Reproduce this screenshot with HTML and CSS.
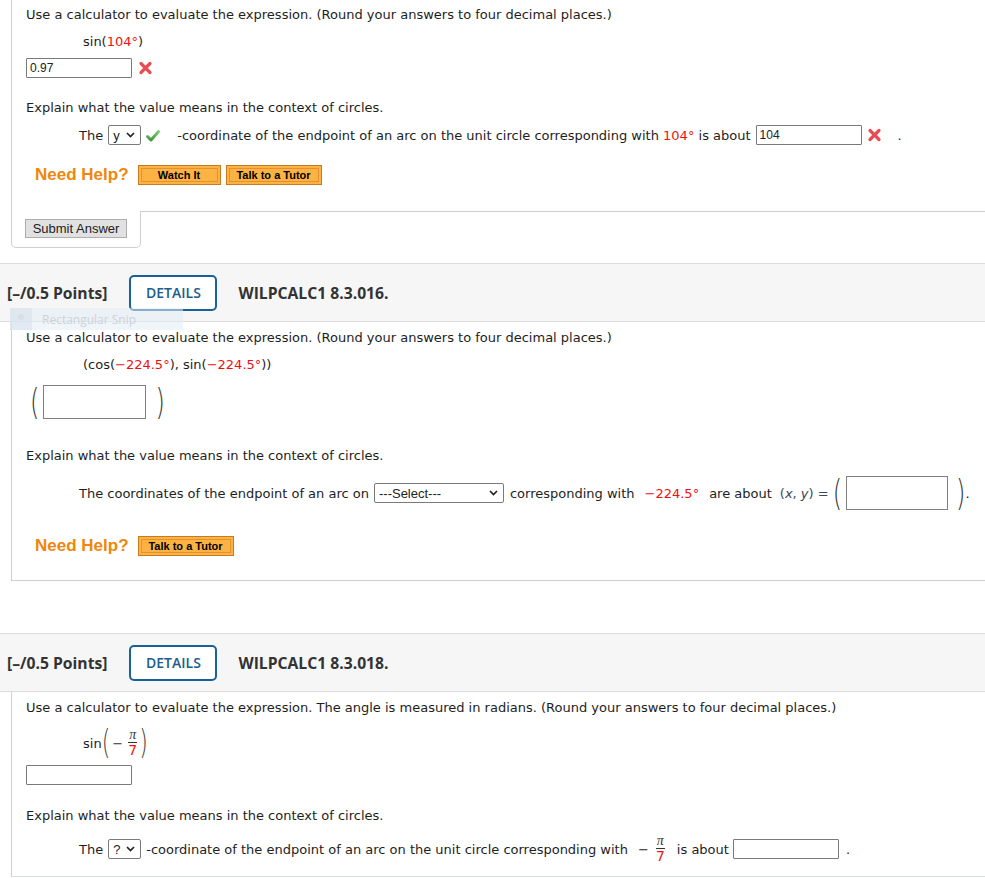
FILE: index.html
```html
<!DOCTYPE html>
<html>
<head>
<meta charset="utf-8">
<link rel="stylesheet" href="styles.css">
</head>
<body>
<div class="page">

  <div class="qbody q1">
    <div class="line">Use a calculator to evaluate the expression. (Round your answers to four decimal places.)</div>
    <div class="line expr mt9">sin(<span class="red">104°</span>)</div>
    <div class="row h20 mt7">
      <span class="inp w106">0.97</span>
      <svg class="xm ml6" width="15" height="14" viewBox="0 0 15 14"><path d="M3 2.5 L12 11.5 M12 2.5 L3 11.5" stroke="#e94c52" stroke-width="3.2" stroke-linecap="round"/></svg>
    </div>
    <div class="line mt21">Explain what the value means in the context of circles.</div>
    <div class="row h20 mt8 sent">
      <span>The</span>
      <span class="sel ml5 wsel">y<svg class="chev" width="9" height="6" viewBox="0 0 9 6"><path d="M1 1 L4.5 4.5 L8 1" fill="none" stroke="#222" stroke-width="1.7"/></svg></span>
      <svg class="ml4" width="16" height="15" viewBox="0 0 16 15"><defs><linearGradient id="g1" x1="0" y1="0" x2="0" y2="1"><stop offset="0" stop-color="#7ccc74"/><stop offset="1" stop-color="#3e9a3e"/></linearGradient></defs><path d="M2.5 8.5 L6 12 L13.5 3.5" fill="none" stroke="url(#g1)" stroke-width="3" stroke-linecap="round" stroke-linejoin="round"/></svg>
      <span class="ml16">-coordinate of the endpoint of an arc on the unit circle corresponding with <span class="red">104°</span> is about</span>
      <span class="inp w106 ml5">104</span>
      <svg class="xm ml5" width="15" height="14" viewBox="0 0 15 14"><path d="M3 2.5 L12 11.5 M12 2.5 L3 11.5" stroke="#e94c52" stroke-width="3.2" stroke-linecap="round"/></svg>
      <span class="ml16">.</span>
    </div>
    <div class="row h20 mt20 help">
      <span class="needhelp">Need Help?</span>
      <button class="obtn w83 ml9">Watch It</button>
      <button class="obtn w96 ml5">Talk to a Tutor</button>
    </div>
  </div>
  <div class="foot">
    <div class="tab"><button class="submit">Submit Answer</button></div>
    <div class="fill"></div>
  </div>

  <div class="qhead mt15">
    <span class="pts">[–/0.5 Points]</span>
    <span class="details">DETAILS</span>
    <span class="qid">WILPCALC1 8.3.016.</span>
  </div>
  <div class="qbody q2">
    <div class="line">Use a calculator to evaluate the expression. (Round your answers to four decimal places.)</div>
    <div class="line expr mt9">(cos(<span class="red">−224.5°</span>), sin(<span class="red">−224.5°</span>))</div>
    <div class="row h35 mt10 prow">
      <span class="bigp">(</span>
      <span class="box w103 ml4"></span>
      <span class="bigp ml9">)</span>
    </div>
    <div class="line mt28">Explain what the value means in the context of circles.</div>
    <div class="row h34 mt11 sent">
      <span>The coordinates of the endpoint of an arc on</span>
      <span class="sel ml5 wsel2">---Select---<svg class="chev" width="9" height="6" viewBox="0 0 9 6"><path d="M1 1 L4.5 4.5 L8 1" fill="none" stroke="#222" stroke-width="1.7"/></svg></span>
      <span class="ml6">corresponding with</span>
      <span class="red ml10">−224.5°</span>
      <span class="ml10">are about</span>
      <span class="xy ml8">(<i>x</i>, <i>y</i>) =</span>
      <span class="bigp ml4">(</span>
      <span class="box w102 ml4"></span>
      <span class="bigp ml8">)</span><span>.</span>
    </div>
    <div class="row h20 mt26 help">
      <span class="needhelp">Need Help?</span>
      <button class="obtn w96 ml9">Talk to a Tutor</button>
    </div>
  </div>

  <div class="qhead mt52">
    <span class="pts">[–/0.5 Points]</span>
    <span class="details">DETAILS</span>
    <span class="qid">WILPCALC1 8.3.018.</span>
  </div>
  <div class="qbody q3">
    <div class="line">Use a calculator to evaluate the expression. The angle is measured in radians. (Round your answers to four decimal places.)</div>
    <div class="row h32 mt10 expr2">
      <span>sin</span>
      <span class="midp">(</span>
      <span class="minus ml2">−</span>
      <span class="frac ml5"><span class="num">π</span><span class="den">7</span></span>
      <span class="midp ml2">)</span>
    </div>
    <div class="row h20 mt6">
      <span class="inp w106"></span>
    </div>
    <div class="line mt22">Explain what the value means in the context of circles.</div>
    <div class="row h28 mt10 sent">
      <span>The</span>
      <span class="sel ml5 wsel">?<svg class="chev" width="9" height="6" viewBox="0 0 9 6"><path d="M1 1 L4.5 4.5 L8 1" fill="none" stroke="#222" stroke-width="1.7"/></svg></span>
      <span class="ml5">-coordinate of the endpoint of an arc on the unit circle corresponding with</span>
      <span class="ml10">−</span>
      <span class="frac ml7"><span class="num">π</span><span class="den">7</span></span>
      <span class="ml12">is about</span>
      <span class="inp w106 ml4"></span>
      <span class="ml7">.</span>
    </div>
  </div>

  <div class="snip"><span class="snipdot"></span><span class="sniptext">Rectangular Snip</span></div>
</div>
</body>
</html>
```
FILE: styles.css
```css
* { box-sizing: border-box; }
body {
  margin: 0;
  background: #fff;
  font-family: "DejaVu Sans", Verdana, sans-serif;
  font-size: 13px;
  color: #1e1e1e;
}
.page { width: 985px; position: relative; overflow: hidden; }

.qbody {
  margin-left: 11px;
  border-left: 1px solid #cfcfcf;
  padding-left: 14px;
}
.q1 { padding-top: 6px; padding-bottom: 26px; }
.q2 { padding-top: 7px; padding-bottom: 24px; border-bottom: 1px solid #cfcfcf; }
.q3 { padding-top: 7px; padding-bottom: 13px; border-bottom: 1px solid #d6dde3; }

.line { height: 18px; line-height: 18px; white-space: nowrap; }
.expr { margin-left: 57px; }
.red { color: #f01010; }

.row { display: flex; align-items: center; white-space: nowrap; }
.h20 { height: 20px; }
.h28 { height: 28px; }
.h32 { height: 32px; }
.h34 { height: 34px; }
.h35 { height: 35px; }
.sent { margin-left: 53px; }
.help { margin-left: 9px; }
.prow { margin-left: 4px; }
.expr2 { margin-left: 57px; }

.mt6 { margin-top: 6px; } .mt7 { margin-top: 7px; } .mt8 { margin-top: 8px; }
.mt9 { margin-top: 9px; } .mt10 { margin-top: 10px; } .mt11 { margin-top: 11px; }
.mt15 { margin-top: 15px; } .mt20 { margin-top: 20px; } .mt21 { margin-top: 21px; }
.mt22 { margin-top: 22px; } .mt26 { margin-top: 26px; } .mt28 { margin-top: 28px; }
.mt52 { margin-top: 52px; }
.ml2 { margin-left: 2px; } .ml4 { margin-left: 4px; } .ml5 { margin-left: 5px; }
.ml6 { margin-left: 6px; } .ml7 { margin-left: 7px; } .ml8 { margin-left: 8px; }
.ml9 { margin-left: 9px; } .ml10 { margin-left: 10px; } .ml11 { margin-left: 11px; }
.ml12 { margin-left: 12px; } .ml16 { margin-left: 16px; }

.inp {
  display: inline-block;
  height: 20px;
  border: 1px solid #7a7a7a;
  border-radius: 1px;
  font-family: "Liberation Sans", Arial, sans-serif;
  font-size: 12px;
  line-height: 18px;
  padding-left: 3px;
  color: #222;
  background: #fff;
}
.w106 { width: 106px; }
.box {
  display: inline-block;
  height: 34px;
  border: 1px solid #808080;
  background: #fff;
}
.w103 { width: 103px; }
.w102 { width: 102px; }

.sel {
  display: inline-flex;
  align-items: center;
  justify-content: space-between;
  height: 20px;
  border: 1px solid #7a7a7a;
  border-radius: 2px;
  font-family: "Liberation Sans", Arial, sans-serif;
  font-size: 13px;
  padding: 0 5px 0 4px;
  color: #222;
  background: #fff;
}
.wsel { width: 33px; }
.wsel2 { width: 130px; }
.chev { display: block; }

.needhelp {
  font-family: "Liberation Sans", Arial, sans-serif;
  font-weight: bold;
  font-size: 17px;
  color: #f0860c;
}
.obtn {
  height: 20px;
  padding: 0;
  border: 1px solid #c97a20;
  background: #fcb344;
  box-shadow: inset 0 0 0 2px #fcb344, inset 0 0 0 3px #e4922f;
  font-family: "Liberation Sans", Arial, sans-serif;
  font-weight: bold;
  font-size: 11px;
  color: #000;
}
.w83 { width: 83px; }
.w96 { width: 96px; }

.foot { display: flex; margin-left: 11px; }
.tab {
  width: 130px;
  height: 37px;
  border: 1px solid #cfcfcf;
  border-top: none;
  border-radius: 0 0 5px 5px;
  padding: 8px 0 0 13px;
}
.fill { flex: 1; border-top: 1px solid #cfcfcf; }
.submit {
  display: block;
  width: 102px;
  height: 19px;
  padding: 0;
  background: #e1e1e1;
  border: 1px solid #adadad;
  font-family: "Liberation Sans", Arial, sans-serif;
  font-size: 13px;
  color: #222;
}

.qhead {
  height: 59px;
  border-top: 1px solid #dcdcdc;
  border-bottom: 1px solid #dcdcdc;
  background: #f6f6f6;
  display: flex;
  align-items: center;
  padding-left: 7px;
  font-family: "Open Sans", sans-serif;
  color: #333;
}
.pts { font-weight: bold; font-size: 15.7px; }
.qid { font-weight: bold; font-size: 15.7px; margin-left: 21px; }
.details {
  margin-left: 22px;
  width: 88px;
  height: 36px;
  border: 2px solid #1a6197;
  border-radius: 5px;
  background: #fff;
  color: #215d8c;
  font-size: 14px;
  font-weight: 600;
  display: flex;
  align-items: center;
  justify-content: center;
}

.bigp {
  display: inline-block;
  font-family: "DejaVu Sans", sans-serif;
  font-weight: 200;
  font-size: 24px;
  line-height: 24px;
  color: #333;
  transform: scaleY(1.45);
}
.midp {
  display: inline-block;
  font-family: "DejaVu Sans", sans-serif;
  font-weight: 200;
  font-size: 22px;
  line-height: 22px;
  color: #444;
  transform: scaleY(1.5);
}
.minus { color: #333; }
.xy { color: #3c465c; }
.xy i { font-style: italic; }

.frac {
  display: inline-flex;
  flex-direction: column;
  align-items: center;
}
.frac .num {
  font-family: "Liberation Serif", serif;
  font-style: italic;
  font-size: 14px;
  line-height: 12px;
  color: #333;
  padding: 0 1px 1px;
  border-bottom: 1px solid #333;
}
.frac .den {
  font-size: 14px;
  line-height: 15px;
  color: #f01010;
}

.snip {
  position: absolute;
  left: 10px;
  top: 308px;
  width: 173px;
  height: 22px;
  background: rgba(228, 237, 246, 0.55);
  display: flex;
  align-items: center;
}
.snipdot {
  width: 22px;
  height: 22px;
  background: rgba(215, 226, 238, 0.6);
  position: relative;
}
.snipdot::after {
  content: "";
  position: absolute;
  left: 8px;
  top: 6px;
  width: 6px;
  height: 6px;
  border-radius: 50%;
  background: #dadfe4;
}
.sniptext {
  margin-left: 10px;
  font-family: "Open Sans", sans-serif;
  font-size: 12px;
  color: #cdd3d9;
}
```
